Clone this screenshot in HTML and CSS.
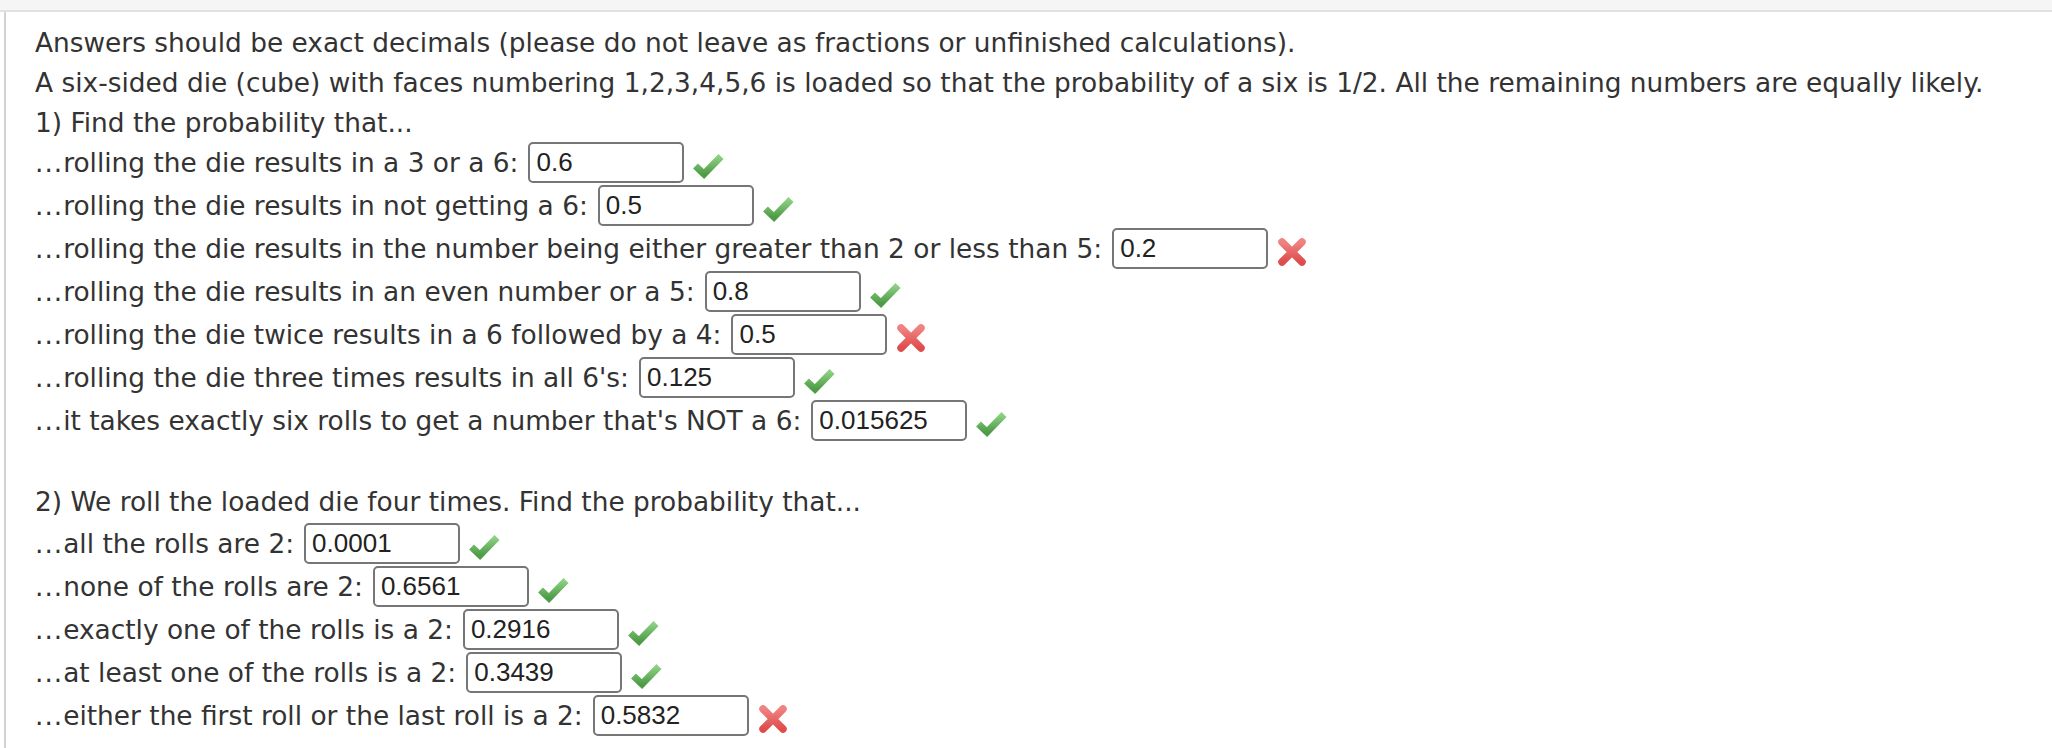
FILE: index.html
```html
<!DOCTYPE html>
<html>
<head>
<meta charset="utf-8">
<link rel="stylesheet" href="styles.css">
</head>
<body>
<svg width="0" height="0" class="defs">
  <defs>
    <linearGradient id="gOk" x1="0" y1="0" x2="0" y2="1">
      <stop offset="0" stop-color="#8ed184"/>
      <stop offset="1" stop-color="#4f9c47"/>
    </linearGradient>
    <linearGradient id="gBad" x1="0" y1="0" x2="0" y2="1">
      <stop offset="0" stop-color="#f08282"/>
      <stop offset="1" stop-color="#df4c4c"/>
    </linearGradient>
    <symbol id="ok" viewBox="0 0 32 28"><path d="M3.5 15 L12 23 L29 5.5" fill="none" stroke="url(#gOk)" stroke-width="7"/></symbol>
    <symbol id="bad" viewBox="0 0 32 32"><path d="M6 6 L26 26 M26 6 L6 26" fill="none" stroke="url(#gBad)" stroke-width="7.5" stroke-linecap="round"/></symbol>
  </defs>
</svg>
<div class="topbar"></div>
<div class="panel">
  <div class="line">Answers should be exact decimals (please do not leave as fractions or unfinished calculations).</div>
  <div class="line">A six-sided die (cube) with faces numbering 1,2,3,4,5,6 is loaded so that the probability of a six is 1/2. All the remaining numbers are equally likely.</div>
  <div class="line last">1) Find the probability that...</div>

  <div class="row"><span class="label"><span class="dots">...</span>rolling the die results in a 3 or a 6:</span><input class="ans" type="text" value="0.6" readonly><svg class="mark ok"><use href="#ok"/></svg></div>
  <div class="row"><span class="label"><span class="dots">...</span>rolling the die results in not getting a 6:</span><input class="ans" type="text" value="0.5" readonly><svg class="mark ok"><use href="#ok"/></svg></div>
  <div class="row"><span class="label"><span class="dots">...</span>rolling the die results in the number being either greater than 2 or less than 5:</span><input class="ans" type="text" value="0.2" readonly><svg class="mark bad"><use href="#bad"/></svg></div>
  <div class="row"><span class="label"><span class="dots">...</span>rolling the die results in an even number or a 5:</span><input class="ans" type="text" value="0.8" readonly><svg class="mark ok"><use href="#ok"/></svg></div>
  <div class="row"><span class="label"><span class="dots">...</span>rolling the die twice results in a 6 followed by a 4:</span><input class="ans" type="text" value="0.5" readonly><svg class="mark bad"><use href="#bad"/></svg></div>
  <div class="row"><span class="label"><span class="dots">...</span>rolling the die three times results in all 6's:</span><input class="ans" type="text" value="0.125" readonly><svg class="mark ok"><use href="#ok"/></svg></div>
  <div class="row"><span class="label"><span class="dots">...</span>it takes exactly six rolls to get a number that's NOT a 6:</span><input class="ans" type="text" value="0.015625" readonly><svg class="mark ok"><use href="#ok"/></svg></div>

  <div class="line blank"></div>
  <div class="line">2) We roll the loaded die four times. Find the probability that...</div>

  <div class="row"><span class="label"><span class="dots">...</span>all the rolls are 2:</span><input class="ans" type="text" value="0.0001" readonly><svg class="mark ok"><use href="#ok"/></svg></div>
  <div class="row"><span class="label"><span class="dots">...</span>none of the rolls are 2:</span><input class="ans" type="text" value="0.6561" readonly><svg class="mark ok"><use href="#ok"/></svg></div>
  <div class="row"><span class="label"><span class="dots">...</span>exactly one of the rolls is a 2:</span><input class="ans" type="text" value="0.2916" readonly><svg class="mark ok"><use href="#ok"/></svg></div>
  <div class="row"><span class="label"><span class="dots">...</span>at least one of the rolls is a 2:</span><input class="ans" type="text" value="0.3439" readonly><svg class="mark ok"><use href="#ok"/></svg></div>
  <div class="row"><span class="label"><span class="dots">...</span>either the first roll or the last roll is a 2:</span><input class="ans" type="text" value="0.5832" readonly><svg class="mark bad"><use href="#bad"/></svg></div>
</div>
</body>
</html>
```
FILE: styles.css
```css
html, body {
  margin: 0;
  padding: 0;
  background: #ffffff;
}
body {
  font-family: "DejaVu Sans", Verdana, sans-serif;
  font-size: 26.4px;
  color: #333333;
  overflow: hidden;
}
.defs {
  position: absolute;
  width: 0;
  height: 0;
}
.topbar {
  height: 10px;
  background: #f5f5f5;
  border-bottom: 2px solid #e2e2e2;
}
.panel {
  margin-left: 4px;
  border-left: 2px solid #d2d2d2;
  padding: 11px 0 40px 29px;
}
.line {
  height: 40px;
  line-height: 40px;
  white-space: nowrap;
}
.line.last {
  height: 38px;
}
.row {
  display: flex;
  align-items: center;
  height: 43px;
  white-space: pre;
}
.label {
  line-height: 30px;
}
.dots {
  letter-spacing: 1px;
}
.ans {
  box-sizing: border-box;
  width: 156px;
  height: 41px;
  margin: 0 0 0 10px;
  padding: 0 6px;
  border: 2px solid #767676;
  border-radius: 5px;
  background: #ffffff;
  font-family: "Liberation Sans", Arial, sans-serif;
  font-size: 26px;
  color: #222222;
  outline: none;
}
.mark {
  margin-left: 8px;
  margin-top: 5px;
}
.mark.ok {
  width: 32px;
  height: 28px;
}
.mark.bad {
  width: 32px;
  height: 32px;
  margin-top: 6px;
}
```
